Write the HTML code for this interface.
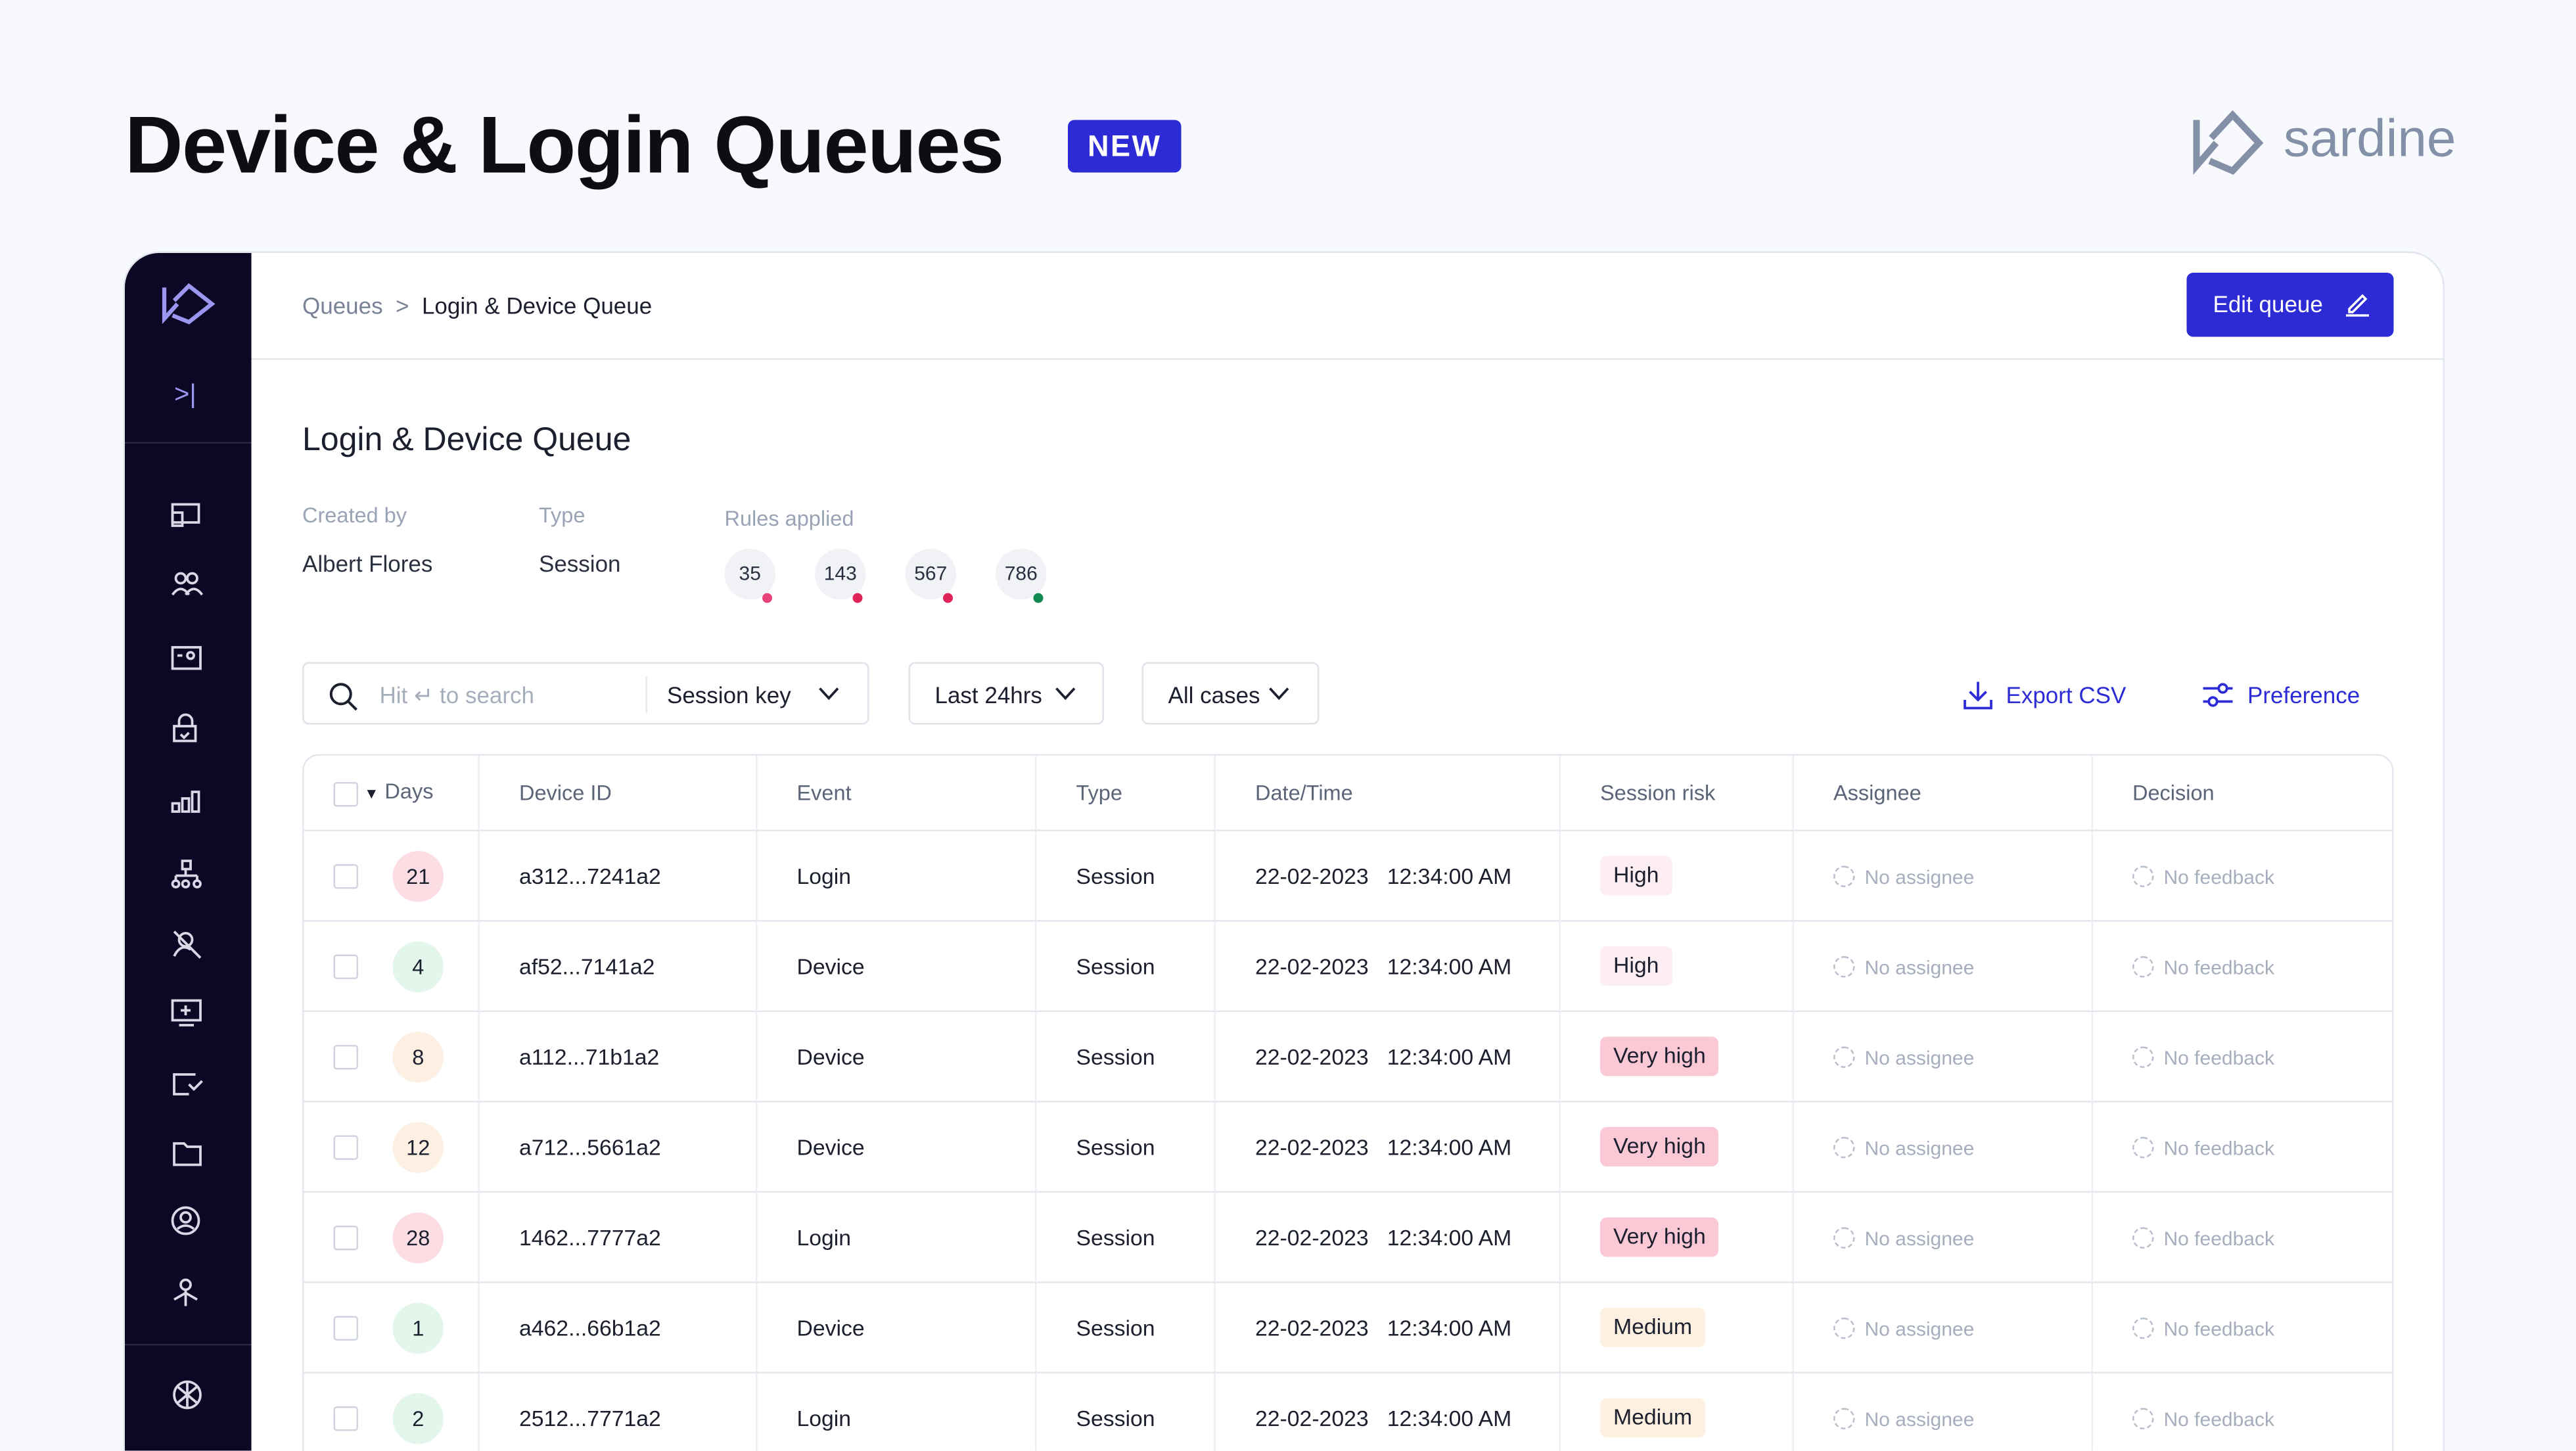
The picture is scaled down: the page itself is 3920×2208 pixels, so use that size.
<!DOCTYPE html>
<html><head><meta charset="utf-8"><style>
html,body{margin:0;padding:0;background:#f7f9fc;overflow:hidden;width:3920px;height:2208px}
#w{position:absolute;left:0;top:0;width:1568px;height:883px;overflow:hidden;transform:scale(2.5);transform-origin:0 0;font-family:"Liberation Sans",sans-serif;color:#1b1f2e}
.a{position:absolute;white-space:nowrap}
.card{position:absolute;left:75px;top:153px;width:1411px;height:760px;background:#fff;border:1px solid #e1e5ed;border-radius:22px;overflow:hidden}
.side{position:absolute;left:0;top:0;width:77px;height:100%;background:#0b0724}
.lbl{font-size:13px;color:#9aa3b5}
.val{font-size:14px;color:#2b3040}
.chip{position:absolute;top:180px;width:31px;height:31px;border-radius:50%;background:#f1f2f6;font-size:12px;text-align:center;line-height:31px;color:#2b3040}
.chip i{position:absolute;right:2px;bottom:-2px;width:6px;height:6px;border-radius:50%}
.box{position:absolute;top:249px;height:38px;border:1px solid #dfe3ea;border-radius:4px;font-size:14px;line-height:38px;box-sizing:border-box}
table{position:absolute;left:108px;top:305px;border-collapse:separate;border-spacing:0;border:1px solid #e3e7ee;border-radius:10px;font-size:13.5px}
td,th{height:55px;border-right:1px solid #eceff4;border-bottom:1px solid #e3e7ee;text-align:left;padding:0 0 0 24px;box-sizing:border-box;font-weight:normal;white-space:nowrap}
th{height:46px;color:#5c6478;font-size:13px}
td:last-child,th:last-child{border-right:none}
.cb{display:inline-block;width:13px;height:13px;border:1px solid #cfd4de;border-radius:2px;vertical-align:middle}
.d{display:inline-block;width:31px;height:31px;border-radius:50%;text-align:center;line-height:31px;font-size:13px;margin-left:21px;vertical-align:middle}
.pk{background:#fcdde4}.gr{background:#e3f6ec}.be{background:#fdf0e2}
.r{display:inline-block;padding:0 8px;height:24px;line-height:24px;border-radius:4px;color:#1b1f2e}
.h{background:#fdeef2}.vh{background:#fbc8d5}.m{background:#fdf0e1}
.na{color:#a6adbd;font-size:12px}
.na:before{content:"";display:inline-block;width:11px;height:11px;border:1px dashed #b8bfcc;border-radius:50%;vertical-align:-2px;margin-right:6px}
</style></head><body><div id="w">
<div class="a" style="left:76px;top:61px;font-size:49px;font-weight:bold;letter-spacing:-0.6px;color:#0d0d14">Device &amp; Login Queues</div>
<div class="a" style="left:650px;top:73px;width:69px;height:32px;background:#2d2bd6;border-radius:4px;color:#fff;font-size:18px;font-weight:bold;text-align:center;line-height:32px;letter-spacing:1px">NEW</div>
<svg class="a" style="left:1335px;top:67px" width="50" height="40" viewBox="0 0 50 40"><path d="M2 6 L2 34 L14 20 M10 31 L24 37 L40 20 L24 3 L11 17" fill="none" stroke="#8390a8" stroke-width="4" stroke-linejoin="miter"/></svg>
<div class="a" style="left:1390px;top:66px;font-size:32px;color:#8290a8">sardine</div>

<div class="card">
 <div class="side">
  <svg class="a" style="left:22px;top:18px" width="34" height="26" viewBox="0 0 34 26"><path d="M2 3 L2 22 L10 13 M7 20 L17 24 L31 13 L17 2 L8 11" fill="none" stroke="#9b97f0" stroke-width="2.5"/></svg>
  <div class="a" style="left:30px;top:78px;color:#9b97f0;font-size:16px">&gt;|</div>
  <div class="a" style="left:0;top:115px;width:77px;height:1px;background:#2a2745"></div>
  <div class="a" style="left:0;top:664px;width:77px;height:1px;background:#2a2745"></div>
  <svg class="a" style="left:27px;top:150px" width="22" height="500" viewBox="0 0 22 500" fill="none" stroke="#d8d8e6" stroke-width="1.5">
   <rect x="2" y="3" width="16" height="11"/><rect x="2" y="8" width="6" height="8"/>
   <circle cx="7" cy="48" r="3"/><circle cx="14" cy="48" r="3"/><path d="M2 58 q5-7 10 0 M10 58 q5-7 10 0"/>
   <rect x="2" y="90" width="17" height="13"/><circle cx="13" cy="95" r="2"/><path d="M5 95h3"/>
   <rect x="3" y="138" width="13" height="9"/><path d="M6 138v-3a4 4 0 0 1 8 0v3 M7 143l2 2 3-3"/>
   <rect x="2" y="185" width="4" height="5"/><rect x="8" y="182" width="4" height="8"/><rect x="14" y="178" width="4" height="12"/>
   <rect x="8" y="220" width="5" height="5"/><path d="M10 225v4 M4 229h13 M4 229v3 M17 229v3"/><circle cx="4" cy="234" r="2"/><circle cx="10" cy="234" r="2"/><circle cx="17" cy="234" r="2"/>
   <circle cx="10" cy="268" r="4"/><path d="M3 278 q4-8 10-4 M3 263 l16 16"/>
   <rect x="2" y="305" width="17" height="12"/><path d="M10 308v6 M7 311h6 M6 320h9"/>
   <path d="M16 350 H3 V362 H12 M12 356l3 3 5-5"/>
   <path d="M3 392h6l2 2h8v11H3z"/>
   <circle cx="10" cy="439" r="8"/><circle cx="10" cy="437" r="3"/><path d="M5 444q5-4 10 0"/>
   <circle cx="10" cy="478" r="3"/><path d="M10 481v10 M3 487l7-4 7 4"/>
  </svg>
  <svg class="a" style="left:27px;top:684px" width="22" height="22" viewBox="0 0 22 22" fill="none" stroke="#d8d8e6" stroke-width="1.5"><circle cx="11" cy="11" r="8"/><path d="M5 6l12 10 M17 6L5 16 M11 3v16"/></svg>
 </div>
 <div class="a" style="left:108px;top:24px;font-size:14px;color:#7a8296">Queues &nbsp;&gt;&nbsp; <span style="color:#1b1f2e">Login &amp; Device Queue</span></div>
 <div class="a" style="left:1255px;top:12px;width:126px;height:39px;background:#2d2bd6;border-radius:4px;color:#fff;font-size:14px;line-height:39px;padding-left:16px;box-sizing:border-box">Edit queue <svg style="position:absolute;left:96px;top:11px" width="16" height="16" viewBox="0 0 16 16" fill="none" stroke="#fff" stroke-width="1.4"><path d="M3 11l8-8 2 2-8 8H3z M1 15h14"/></svg></div>
 <div class="a" style="left:77px;top:64px;width:1340px;height:1px;background:#e3e7ee"></div>
 <div class="a" style="left:108px;top:103px;font-size:20px;color:#1b1f2e">Login &amp; Device Queue</div>
 <div class="a lbl" style="left:108px;top:152px">Created by</div>
 <div class="a lbl" style="left:252px;top:152px">Type</div>
 <div class="a lbl" style="left:365px;top:154px">Rules applied</div>
 <div class="a val" style="left:108px;top:181px">Albert Flores</div>
 <div class="a val" style="left:252px;top:181px">Session</div>
 <div class="chip" style="left:365px">35<i style="background:#e8407a"></i></div>
 <div class="chip" style="left:420px">143<i style="background:#e0245a"></i></div>
 <div class="chip" style="left:475px">567<i style="background:#e0245a"></i></div>
 <div class="chip" style="left:530px">786<i style="background:#118a4f"></i></div>

 <div class="box" style="left:108px;width:345px">
  <svg class="a" style="left:15px;top:11px" width="18" height="18" viewBox="0 0 18 18" fill="none" stroke="#1b1f2e" stroke-width="1.6"><circle cx="7.5" cy="7.5" r="6"/><path d="M12 12l5 5"/></svg>
  <span class="a" style="left:46px;color:#a6adbd">Hit ↵ to search</span>
  <span class="a" style="left:208px;top:8px;width:1px;height:22px;background:#e3e7ee"></span>
  <span class="a" style="left:221px">Session key</span>
  <svg class="a" style="left:313px;top:14px" width="13" height="9" viewBox="0 0 13 9" fill="none" stroke="#1b1f2e" stroke-width="1.5"><path d="M1 1l5.5 6L12 1"/></svg>
 </div>
 <div class="box" style="left:477px;width:119px;padding-left:15px">Last 24hrs
  <svg style="position:absolute;left:88px;top:14px" width="13" height="9" viewBox="0 0 13 9" fill="none" stroke="#1b1f2e" stroke-width="1.5"><path d="M1 1l5.5 6L12 1"/></svg></div>
 <div class="box" style="left:619px;width:108px;padding-left:15px">All cases
  <svg style="position:absolute;left:76px;top:14px" width="13" height="9" viewBox="0 0 13 9" fill="none" stroke="#1b1f2e" stroke-width="1.5"><path d="M1 1l5.5 6L12 1"/></svg></div>
 <svg class="a" style="left:1119px;top:260px" width="18" height="18" viewBox="0 0 18 18" fill="none" stroke="#2d2bd6" stroke-width="1.5"><path d="M9 1v11 M4 7l5 5 5-5 M1 12v5h16v-5"/></svg>
 <div class="a" style="left:1145px;top:261px;font-size:14px;color:#2d2bd6">Export CSV</div>
 <svg class="a" style="left:1264px;top:260px" width="20" height="18" viewBox="0 0 20 18" fill="none" stroke="#2d2bd6" stroke-width="1.5"><path d="M1 5h18 M1 13h18"/><circle cx="13" cy="5" r="2.5" fill="#fff"/><circle cx="7" cy="13" r="2.5" fill="#fff"/></svg>
 <div class="a" style="left:1292px;top:261px;font-size:14px;color:#2d2bd6">Preference</div>

 <table>
 <tr><th style="width:107px;padding-left:18px"><span class="cb"></span> <span style="font-size:9px;color:#1b1f2e">▼</span> Days</th><th style="width:169px">Device ID</th><th style="width:170px">Event</th><th style="width:109px">Type</th><th style="width:210px">Date/Time</th><th style="width:142px">Session risk</th><th style="width:182px">Assignee</th><th style="width:182px">Decision</th></tr>
 <tr><td style="padding-left:18px"><span class="cb"></span><span class="d pk">21</span></td><td>a312...7241a2</td><td>Login</td><td>Session</td><td>22-02-2023 &nbsp; 12:34:00 AM</td><td><span class="r h">High</span></td><td><span class="na">No assignee</span></td><td><span class="na">No feedback</span></td></tr>
 <tr><td style="padding-left:18px"><span class="cb"></span><span class="d gr">4</span></td><td>af52...7141a2</td><td>Device</td><td>Session</td><td>22-02-2023 &nbsp; 12:34:00 AM</td><td><span class="r h">High</span></td><td><span class="na">No assignee</span></td><td><span class="na">No feedback</span></td></tr>
 <tr><td style="padding-left:18px"><span class="cb"></span><span class="d be">8</span></td><td>a112...71b1a2</td><td>Device</td><td>Session</td><td>22-02-2023 &nbsp; 12:34:00 AM</td><td><span class="r vh">Very high</span></td><td><span class="na">No assignee</span></td><td><span class="na">No feedback</span></td></tr>
 <tr><td style="padding-left:18px"><span class="cb"></span><span class="d be">12</span></td><td>a712...5661a2</td><td>Device</td><td>Session</td><td>22-02-2023 &nbsp; 12:34:00 AM</td><td><span class="r vh">Very high</span></td><td><span class="na">No assignee</span></td><td><span class="na">No feedback</span></td></tr>
 <tr><td style="padding-left:18px"><span class="cb"></span><span class="d pk">28</span></td><td>1462...7777a2</td><td>Login</td><td>Session</td><td>22-02-2023 &nbsp; 12:34:00 AM</td><td><span class="r vh">Very high</span></td><td><span class="na">No assignee</span></td><td><span class="na">No feedback</span></td></tr>
 <tr><td style="padding-left:18px"><span class="cb"></span><span class="d gr">1</span></td><td>a462...66b1a2</td><td>Device</td><td>Session</td><td>22-02-2023 &nbsp; 12:34:00 AM</td><td><span class="r m">Medium</span></td><td><span class="na">No assignee</span></td><td><span class="na">No feedback</span></td></tr>
 <tr><td style="padding-left:18px"><span class="cb"></span><span class="d gr">2</span></td><td>2512...7771a2</td><td>Login</td><td>Session</td><td>22-02-2023 &nbsp; 12:34:00 AM</td><td><span class="r m">Medium</span></td><td><span class="na">No assignee</span></td><td><span class="na">No feedback</span></td></tr>
 </table>
</div>
</div></body></html>
